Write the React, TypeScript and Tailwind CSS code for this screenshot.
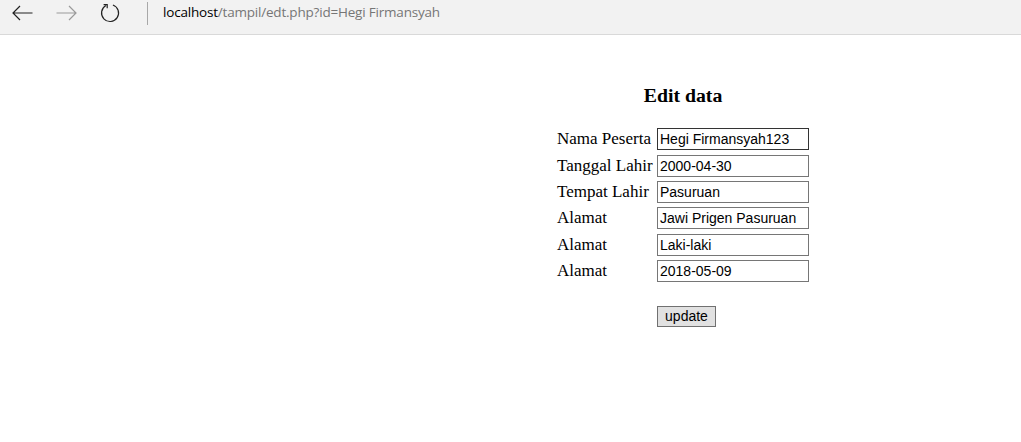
import React from "react";

const rows: [string, string][] = [
  ["Nama Peserta", "Hegi Firmansyah123"],
  ["Tanggal Lahir", "2000-04-30"],
  ["Tempat Lahir", "Pasuruan"],
  ["Alamat", "Jawi Prigen Pasuruan"],
  ["Alamat", "Laki-laki"],
  ["Alamat", "2018-05-09"],
];

export default function App() {
  return (
    <div className="w-[1021px] h-[442px] bg-white overflow-hidden">
      <div className="h-[35px] bg-[#f2f2f2] border-b border-[#d9d9d9]">
        <div className="h-[25px] flex items-center">
          <div className="ml-[12px] w-[22px] flex">
            <svg width="21" height="16" viewBox="0 0 21 16" fill="none" stroke="#222" strokeWidth="1.2">
              <path d="M1 8 H20.5 M8 1 L1 8 L8 15" />
            </svg>
          </div>
          <div className="ml-[22px] w-[22px] flex">
            <svg width="21" height="16" viewBox="0 0 21 16" fill="none" stroke="#9a9a9a" strokeWidth="1.2">
              <path d="M0.5 8 H20 M13 1 L20 8 L13 15" />
            </svg>
          </div>
          <div className="ml-[21px] w-[22px] flex">
            <svg width="22" height="22" viewBox="0 0 22 22" fill="none" stroke="#222" strokeWidth="1.2">
              <path d="M13.9 3 A8.5 8.5 0 1 1 6.9 3.6" />
              <path d="M4.6 2.6 H8.2 V6.2" />
            </svg>
          </div>
          <div className="ml-[26px] w-px h-[23px] bg-[#a8a8a8] self-end" />
          <div
            className="ml-[15px] text-[13.5px] text-[#767676]"
            style={{ fontFamily: '"Open Sans", "Noto Sans", sans-serif', letterSpacing: "-0.2px" }}
          >
            <span className="text-black">localhost</span>/tampil/edt.php?id=Hegi Firmansyah
          </div>
        </div>
      </div>

      <div className="ml-[555px] w-[256px]" style={{ fontFamily: '"Liberation Serif", serif' }}>
        <h3 className="text-[19.8px] font-bold text-center leading-[22px] mt-[49px]">Edit data</h3>
        <div className="mt-[20px] flex flex-col">
          {rows.map(([label, value], i) => (
            <div key={i} className="flex items-center h-[26.4px]">
              <div className="w-[102px] pl-[2px] text-[17px] text-black leading-[20px] whitespace-nowrap">{label}</div>
              <div
                className={
                  "w-[152px] h-[22px] border bg-white text-[14px] leading-[20px] pl-[2px] text-black whitespace-nowrap overflow-hidden " +
                  (i === 0 ? "border-[#333333]" : "border-[#767676]")
                }
                style={{ fontFamily: '"Liberation Sans", Arial, sans-serif' }}
              >
                {value}
              </div>
            </div>
          ))}
          <div className="flex mt-[22px]">
            <div className="w-[102px]" />
            <button
              className="w-[59px] h-[21px] border border-[#707070] bg-[#e1e1e1] text-[14px] leading-[19px] text-black"
              style={{ fontFamily: '"Liberation Sans", Arial, sans-serif' }}
            >
              update
            </button>
          </div>
        </div>
      </div>
    </div>
  );
}
